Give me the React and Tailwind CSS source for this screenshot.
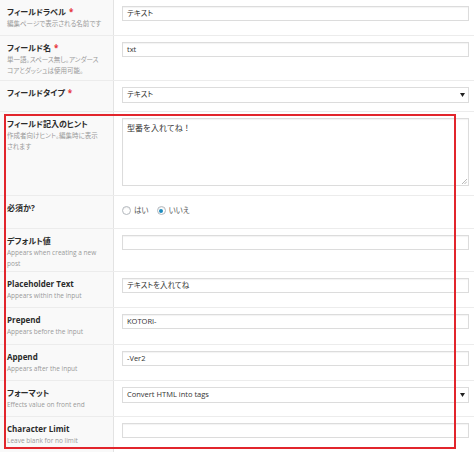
import React from "react";

const jp = "[font-family:'Open_Sans','Noto_Sans_CJK_JP',sans-serif] [font-feature-settings:'palt']";

const Row = ({ label, required, desc, height, children }) => (
  <div className={`flex border-b border-[#ececec] ${height}`}>
    <div className="w-[114px] shrink-0 bg-[#f9f9f9] border-r border-[#e3e3e3] pl-[7px] pr-[4px] pt-[6px]">
      <div className="text-[8px] leading-[12px] font-bold text-[#2b2b2b]">
        {label}
        {required && <span className="text-[#e6343a] ml-[3px]">*</span>}
      </div>
      {desc && (
        <div className="text-[6.5px] leading-[11px] text-[#9a9a9a]">
          {desc.map((line) => (
            <div key={line} className="whitespace-nowrap">{line}</div>
          ))}
        </div>
      )}
    </div>
    <div className="flex-1 pl-[8px] pr-[5px] pt-[6px]">{children}</div>
  </div>
);

const Input = ({ value }) => (
  <div className="h-[15px] border border-[#dcdcdc] bg-white shadow-[inset_0_1px_1px_rgba(0,0,0,0.05)] px-[4px] flex items-center text-[7.5px] text-[#333]">
    {value}
  </div>
);

const Select = ({ value }) => (
  <div className="h-[16px] border border-[#dcdcdc] bg-white pl-[4px] pr-[3px] flex items-center justify-between text-[7.5px] text-[#333]">
    <span>{value}</span>
    <svg width="5" height="4" viewBox="0 0 5 4">
      <path d="M0 0 H5 L2.5 4 Z" fill="#222" />
    </svg>
  </div>
);

const Radio = ({ checked, label }) => (
  <label className="flex items-center gap-[3px] mr-[8px]">
    <span className="w-[9px] h-[9px] rounded-full border border-[#b4b9be] bg-white flex items-center justify-center shadow-[inset_0_1px_1px_rgba(0,0,0,0.08)]">
      {checked && <span className="w-[4px] h-[4px] rounded-full bg-[#1e8cbe]" />}
    </span>
    <span className="text-[7.5px] text-[#555]">{label}</span>
  </label>
);

export default function App() {
  return (
    <div className={`relative w-[474px] h-[452px] overflow-hidden bg-white ${jp}`}>
      <Row label="フィールドラベル" required desc={["編集ページで表示される名前です"]} height="h-[36px]">
        <Input value="テキスト" />
      </Row>
      <Row
        label="フィールド名"
        required
        desc={["単一語。スペース無し。アンダース", "コアとダッシュは使用可能。"]}
        height="h-[45px]"
      >
        <Input value="txt" />
      </Row>
      <Row label="フィールドタイプ" required height="h-[31px]">
        <Select value="テキスト" />
      </Row>
      <Row label="フィールド記入のヒント" desc={["作成者向けヒント。編集時に表示", "されます"]} height="h-[84px]">
        <div className="relative h-[68px] border border-[#dcdcdc] bg-white shadow-[inset_0_1px_1px_rgba(0,0,0,0.05)] px-[4px] pt-[3px] text-[8px] text-[#333] [font-feature-settings:normal]">
          型番を入れてね！
          <svg width="5" height="5" viewBox="0 0 5 5" className="absolute right-[1px] bottom-[1px]">
            <path d="M5 0 L0 5 M5 2.5 L2.5 5" stroke="#999" strokeWidth="0.7" />
          </svg>
        </div>
      </Row>
      <Row label="必須か?" height="h-[33px]">
        <div className="flex items-center h-[15px] pt-[2px]">
          <Radio label="はい" />
          <Radio checked label="いいえ" />
        </div>
      </Row>
      <Row label="デフォルト値" desc={["Appears when creating a new", "post"]} height="h-[43px]">
        <Input value="" />
      </Row>
      <Row label="Placeholder Text" desc={["Appears within the input"]} height="h-[36px]">
        <Input value="テキストを入れてね" />
      </Row>
      <Row label="Prepend" desc={["Appears before the input"]} height="h-[37px]">
        <Input value="KOTORI-" />
      </Row>
      <Row label="Append" desc={["Appears after the input"]} height="h-[36px]">
        <Input value="-Ver2" />
      </Row>
      <Row label="フォーマット" desc={["Effects value on front end"]} height="h-[36px]">
        <Select value="Convert HTML into tags" />
      </Row>
      <Row label="Character Limit" desc={["Leave blank for no limit"]} height="h-[36px]">
        <Input value="" />
      </Row>

      {/* highlight box */}
      <div className="absolute left-[4px] top-[114px] w-[452px] h-[335px] border-2 border-[#e2252c] pointer-events-none" />
    </div>
  );
}
